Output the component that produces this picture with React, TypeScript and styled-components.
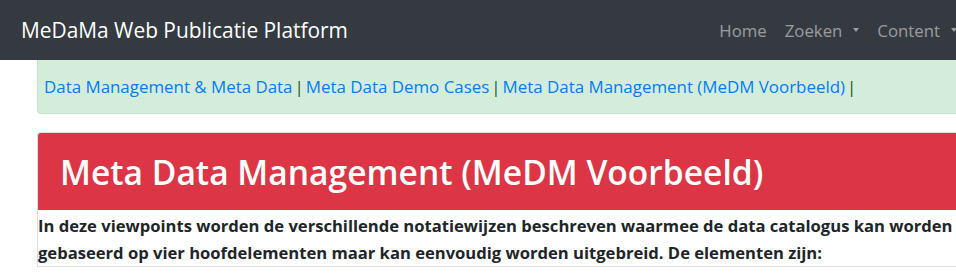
import React from 'react'
import styled, { createGlobalStyle } from 'styled-components'

const GlobalStyle = createGlobalStyle`
  html, body {
    margin: 0;
    padding: 0;
    overflow: hidden;
    background: #fff;
  }
  body {
    font-family: "Open Sans", "Noto Sans", sans-serif;
    color: #212529;
  }
`

const Page = styled.div`
  width: 982px;
`

const Navbar = styled.nav`
  display: flex;
  align-items: center;
  justify-content: space-between;
  height: 60px;
  padding: 0 16px 0 21px;
  background: #343a40;
  box-sizing: border-box;
`

const Brand = styled.a`
  color: #fff;
  font-size: 20.9px;
  text-decoration: none;
`

const NavList = styled.ul`
  display: flex;
  list-style: none;
  margin: 0;
  padding: 0;
`

const NavLink = styled.a<{ $dropdown?: boolean }>`
  display: flex;
  align-items: center;
  padding: 8px 9px;
  font-size: 16.8px;
  color: rgba(255, 255, 255, 0.5);
  text-decoration: none;

  ${(p) =>
    p.$dropdown &&
    `
    &::after {
      content: '';
      margin-left: 11px;
      border-top: 4px solid rgba(255, 255, 255, 0.5);
      border-left: 3.5px solid transparent;
      border-right: 3.5px solid transparent;
    }
  `}
`

const Main = styled.main`
  padding: 0 0 0 37px;
`

const Crumbs = styled.div`
  display: flex;
  align-items: center;
  height: 54px;
  padding: 0 6px;
  background: #d4edda;
  border: 1px solid #c3e6cb;
  border-top: 0;
  border-radius: 0 0 4px 4px;
  box-sizing: border-box;
  font-size: 16.9px;
  color: #155724;
  white-space: nowrap;
`

const CrumbLink = styled.a`
  color: #007bff;
  text-decoration: none;
`

const Sep = styled.span`
  margin: 0 2px;
`

const Card = styled.section`
  margin-top: 18px;
  border: 1px solid rgba(0, 0, 0, 0.125);
  border-radius: 4px 4px 0 0;
  border-right: 0;
`

const CardHeader = styled.header`
  display: flex;
  align-items: center;
  height: 77px;
  padding: 0 22px;
  background: #dc3545;
  border-radius: 3px 3px 0 0;
  box-sizing: border-box;
`

const Title = styled.h1`
  margin: 0;
  color: #fff;
  font-size: 33.6px;
  font-weight: 600;
`

const Lead = styled.p`
  margin: 0;
  padding: 2px 0 0;
  font-size: 16.6px;
  font-weight: 700;
  line-height: 27px;
  white-space: nowrap;
`

const crumbs = [
  'Data Management & Meta Data',
  'Meta Data Demo Cases',
  'Meta Data Management (MeDM Voorbeeld)',
]

export default function App() {
  return (
    <Page>
      <GlobalStyle />
      <Navbar>
        <Brand href="#">MeDaMa Web Publicatie Platform</Brand>
        <NavList>
          <li><NavLink href="#">Home</NavLink></li>
          <li><NavLink href="#" $dropdown>Zoeken</NavLink></li>
          <li><NavLink href="#" $dropdown>Content</NavLink></li>
        </NavList>
      </Navbar>
      <Main>
        <Crumbs>
          {crumbs.map((c) => (
            <React.Fragment key={c}>
              <CrumbLink href="#">{c}</CrumbLink>
              <Sep>|</Sep>
            </React.Fragment>
          ))}
        </Crumbs>
        <Card>
          <CardHeader>
            <Title>Meta Data Management (MeDM Voorbeeld)</Title>
          </CardHeader>
          <Lead>
            In deze viewpoints worden de verschillende notatiewijzen beschreven waarmee de data catalogus kan worden opgebouwd.
            <br />
            gebaseerd op vier hoofdelementen maar kan eenvoudig worden uitgebreid. De elementen zijn:
          </Lead>
        </Card>
      </Main>
    </Page>
  )
}
